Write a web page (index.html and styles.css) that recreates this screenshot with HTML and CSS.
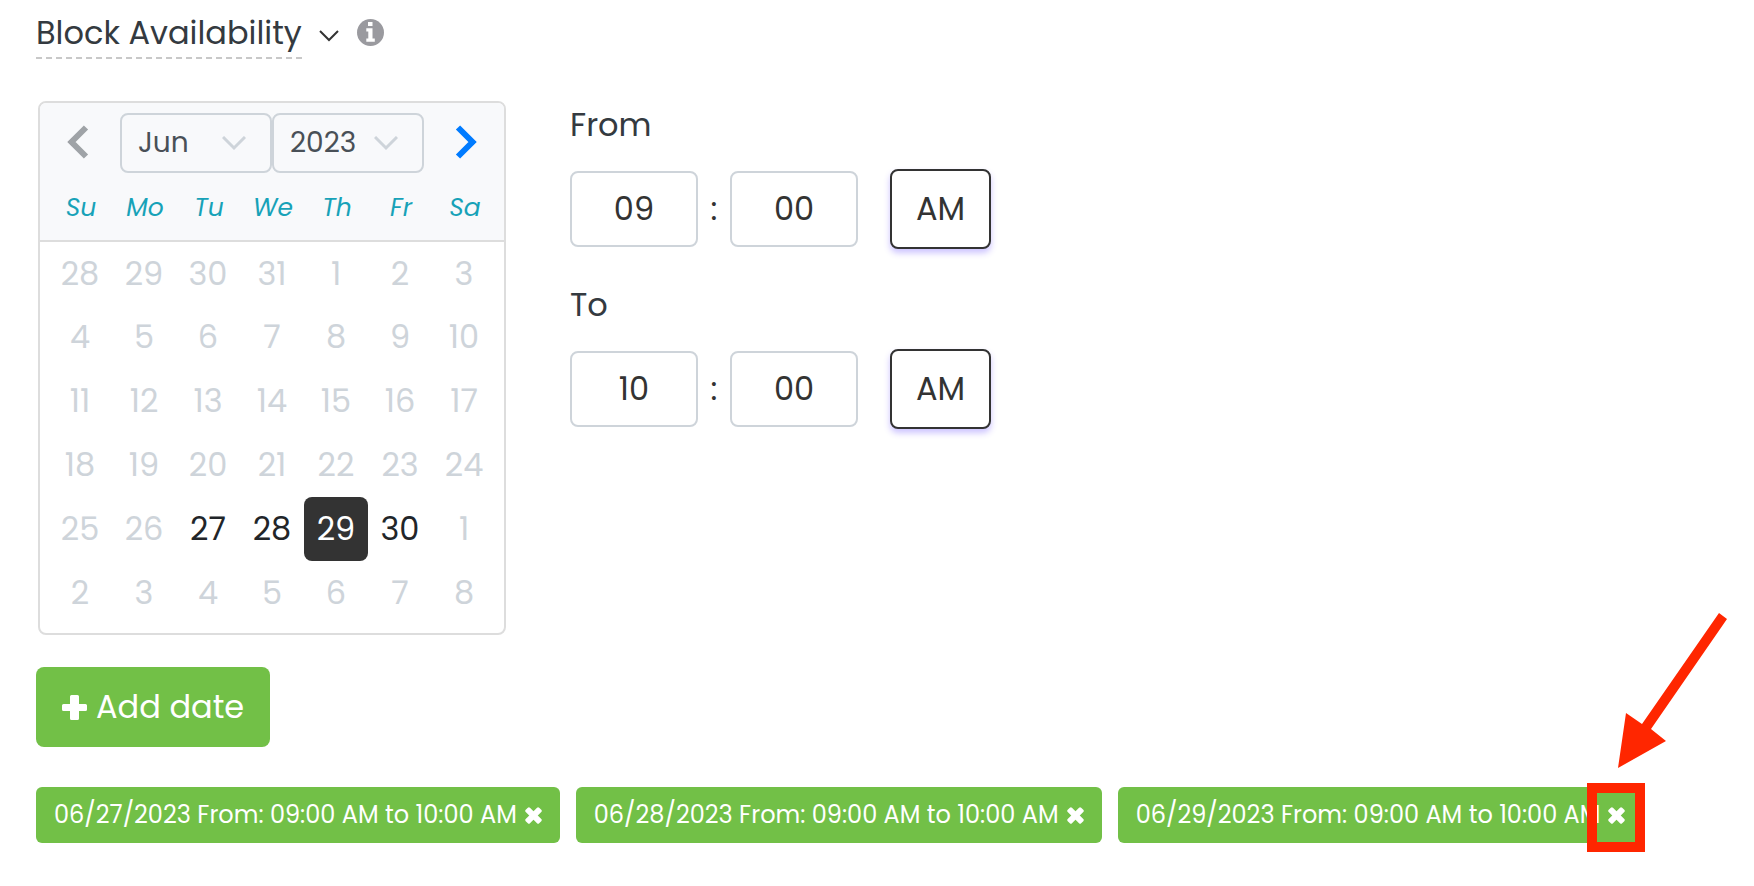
FILE: index.html
```
<!DOCTYPE html>
<html lang="en">
<head>
    <meta charset="UTF-8">
    <meta name="viewport" content="width=device-width, initial-scale=1.0">
    <title>Block Availability</title>
    <link rel="stylesheet" href="styles.css">
</head>
<body>

    <main class="container">
        <header class="heading">
            <h1>Block Availability</h1>
            <button type="button" class="icon-btn toggle" aria-label="Toggle section">
                <svg width="20" height="12" viewBox="0 0 20 12"><path d="M1 1l9 9 9-9" fill="none" stroke="#333" stroke-width="2"/></svg>
            </button>
            <button type="button" class="icon-btn info" aria-label="More information">
                <svg width="27" height="27" viewBox="0 0 27 27"><circle cx="13.500" cy="13.500" r="13.500" fill="#9a9a9f"/><path d="M11 3h4.500v4H11zM9.300 9.200h6.200v10.300h2.300v3.300H9.300v-3.300h2v-7h-2z" fill="#fff"/></svg>
            </button>
        </header>

        <div class="picker">
            <div class="calendar">
                <div class="calendar-header">
                    <button type="button" class="icon-btn prev" aria-label="Previous month">
                        <svg width="22" height="36" viewBox="0 0 22 36"><path d="M19 2.500L4.500 17 19 31.500" fill="none" stroke="#9fa3a7" stroke-width="6"/></svg>
                    </button>
                    <select class="month-select" aria-label="Month">
                        <option>May</option>
                        <option selected>Jun</option>
                        <option>Jul</option>
                    </select>
                    <select class="month-select" aria-label="Year">
                        <option selected>2023</option>
                        <option>2024</option>
                    </select>
                    <button type="button" class="icon-btn next" aria-label="Next month">
                        <svg width="22" height="36" viewBox="0 0 22 36"><path d="M3 2.500L17.500 17 3 31.500" fill="none" stroke="#007bff" stroke-width="6"/></svg>
                    </button>
                </div>
                <table class="days">
                    <thead>
                        <tr><th>Su</th><th>Mo</th><th>Tu</th><th>We</th><th>Th</th><th>Fr</th><th>Sa</th></tr>
                    </thead>
                    <tbody>
                        <tr><td>28</td><td>29</td><td>30</td><td>31</td><td>1</td><td>2</td><td>3</td></tr>
                        <tr><td>4</td><td>5</td><td>6</td><td>7</td><td>8</td><td>9</td><td>10</td></tr>
                        <tr><td>11</td><td>12</td><td>13</td><td>14</td><td>15</td><td>16</td><td>17</td></tr>
                        <tr><td>18</td><td>19</td><td>20</td><td>21</td><td>22</td><td>23</td><td>24</td></tr>
                        <tr><td>25</td><td>26</td><td><button type="button" class="day">27</button></td><td><button type="button" class="day">28</button></td><td><button type="button" class="day selected">29</button></td><td><button type="button" class="day">30</button></td><td>1</td></tr>
                        <tr><td>2</td><td>3</td><td>4</td><td>5</td><td>6</td><td>7</td><td>8</td></tr>
                    </tbody>
                </table>
            </div>

            <div class="times">
                <div class="time-group">
                    <label for="fromHour">From</label>
                    <div class="time-row">
                        <input type="text" id="fromHour" value="09">
                        <span class="colon">:</span>
                        <input type="text" id="fromMinute" value="00" aria-label="From minutes">
                        <button type="button" class="meridian">AM</button>
                    </div>
                </div>
                <div class="time-group">
                    <label for="toHour">To</label>
                    <div class="time-row">
                        <input type="text" id="toHour" value="10">
                        <span class="colon">:</span>
                        <input type="text" id="toMinute" value="00" aria-label="To minutes">
                        <button type="button" class="meridian">AM</button>
                    </div>
                </div>
            </div>
        </div>

        <button type="button" class="add-date">
            <svg width="25" height="25" viewBox="0 0 25 25"><path d="M9.500 0h6a1.500 1.500 0 0 1 1.500 1.500V9h6.500A1.500 1.500 0 0 1 25 10.500v4a1.500 1.500 0 0 1-1.500 1.500H17v7.500a1.500 1.500 0 0 1-1.500 1.500h-6A1.500 1.500 0 0 1 8 23.500V16H1.500A1.500 1.500 0 0 1 0 14.500v-4A1.500 1.500 0 0 1 1.500 9H8V1.500A1.500 1.500 0 0 1 9.500 0z" fill="#fff"/></svg>
            <span>Add date</span>
        </button>

        <div class="tags">
            <div class="tag">
                <span>06/27/2023 From: 09:00 AM to 10:00 AM</span>
                <button type="button" class="icon-btn remove" aria-label="Remove 06/27/2023">
                    <svg width="17" height="17" viewBox="0 0 17 17" fill="#fff"><g transform="rotate(45 8.500 8.500)"><rect x="-1" y="5.500" width="19" height="6" rx="1.500"/><rect x="5.500" y="-1" width="6" height="19" rx="1.500"/></g></svg>
                </button>
            </div>
            <div class="tag">
                <span>06/28/2023 From: 09:00 AM to 10:00 AM</span>
                <button type="button" class="icon-btn remove" aria-label="Remove 06/28/2023">
                    <svg width="17" height="17" viewBox="0 0 17 17" fill="#fff"><g transform="rotate(45 8.500 8.500)"><rect x="-1" y="5.500" width="19" height="6" rx="1.500"/><rect x="5.500" y="-1" width="6" height="19" rx="1.500"/></g></svg>
                </button>
            </div>
            <div class="tag">
                <span>06/29/2023 From: 09:00 AM to 10:00 AM</span>
                <button type="button" class="icon-btn remove" aria-label="Remove 06/29/2023">
                    <svg width="17" height="17" viewBox="0 0 17 17" fill="#fff"><g transform="rotate(45 8.500 8.500)"><rect x="-1" y="5.500" width="19" height="6" rx="1.500"/><rect x="5.500" y="-1" width="6" height="19" rx="1.500"/></g></svg>
                </button>
                <div class="marker"></div>
                <svg class="arrow" width="110" height="156" viewBox="0 0 110 156"><path d="M101 0l8 6-76 110 15 12L0 155l8-55 16 11z" fill="#ff2600"/></svg>
            </div>
        </div>
    </main>

</body>
</html>
```
FILE: styles.css
```
* {
    box-sizing: border-box;
}
body {
    margin: 0;
    background-color: #fff;
    color: #343a40;
    font-family: Poppins, Inter, "Liberation Sans", sans-serif;
    font-size: 32px;
    line-height: 48px;
}
button,
input,
select {
    font: inherit;
    color: inherit;
}
button {
    cursor: pointer;
}
svg {
    display: block;
}
.container {
    padding: 9px 36px 36px;
}
.heading {
    display: flex;
    align-items: flex-start;
}
.heading h1 {
    margin: 0;
    font-size: 32px;
    font-weight: 400;
    border-bottom: 2px dashed #c8c8c8;
}
.icon-btn {
    display: flex;
    padding: 0;
    border: 0;
    background: none;
}
.toggle {
    margin: 21px 0 0 17px;
}
.info {
    margin: 10px 0 0 18px;
}
.picker {
    display: flex;
    gap: 64px;
    margin-top: 42px;
}
.calendar {
    width: 468px;
    margin-left: 2px;
    padding-bottom: 8px;
    border: 2px solid #ddd;
    border-radius: 8px;
    overflow: hidden;
}
.calendar-header {
    display: flex;
    align-items: center;
    padding: 10px 27px 0;
    background-color: #f8f9fb;
}
.calendar-header .prev {
    margin-right: auto;
}
.calendar-header .next {
    margin-left: auto;
}
.month-select {
    width: 152px;
    height: 60px;
    padding: 0 16px;
    border: 2px solid #ced4da;
    border-radius: 8px;
    color: #495057;
    font-size: 28px;
    appearance: none;
    background: url("data:image/svg+xml,%3Csvg xmlns='http://www.w3.org/2000/svg' width='24' height='15'%3E%3Cpath d='M1 1l11 11L23 1' fill='none' stroke='%23ced4da' stroke-width='3'/%3E%3C/svg%3E") no-repeat right 24px center;
}
.days {
    width: 100%;
    border-collapse: collapse;
    table-layout: fixed;
}
.days thead {
    background-color: #f8f9fb;
    border-bottom: 2px solid #ddd;
}
.days th {
    height: 68px;
    padding: 2px 0 0 2px;
    color: #17a2b8;
    font-size: 25px;
    font-style: italic;
    font-weight: 400;
}
.days th:first-child {
    width: 72px;
    padding-left: 10px;
}
.days th:last-child {
    width: 72px;
    padding-right: 8px;
}
.days td {
    height: 64px;
    padding: 0;
    color: #ced4da;
    text-align: center;
}
.days td:first-child {
    padding-left: 8px;
}
.days td:last-child {
    padding-right: 8px;
}
.day {
    display: block;
    width: 64px;
    height: 64px;
    margin: 0 auto;
    padding: 0;
    border: 0;
    border-radius: 8px;
    background: none;
    color: #212529;
}
.day.selected {
    background-color: #333;
    color: #fff;
}
.time-group {
    margin-bottom: 32px;
}
.time-group label {
    display: block;
    margin-bottom: 20px;
}
.time-row {
    display: flex;
    align-items: center;
    color: #333;
}
.time-row input {
    width: 128px;
    height: 76px;
    padding: 0;
    border: 2px solid #ced4da;
    border-radius: 8px;
    text-align: center;
}
.colon {
    width: 32px;
    text-align: center;
}
.meridian {
    width: 101px;
    height: 80px;
    margin-left: 32px;
    padding: 0;
    border: 2px solid #333;
    border-radius: 8px;
    background-color: #fff;
    box-shadow: 0 4px 6px rgba(90, 60, 255, 0.3);
}
.add-date {
    display: flex;
    align-items: center;
    gap: 9px;
    margin-top: 32px;
    height: 80px;
    padding: 0 26px;
    border: 0;
    border-radius: 8px;
    background-color: #72c047;
    color: #fff;
}
.tags {
    display: flex;
    flex-wrap: wrap;
    gap: 16px;
    margin-top: 40px;
}
.tag {
    position: relative;
    display: flex;
    align-items: center;
    gap: 8px;
    height: 56px;
    padding: 0 18px;
    border-radius: 6px;
    background-color: #72c047;
    color: #fff;
    font-size: 24px;
}
/* red frame and arrow over the remove button */
.marker {
    position: absolute;
    top: -4px;
    right: -2px;
    width: 58px;
    height: 69px;
    border: 10px solid #ff2600;
}
.arrow {
    position: absolute;
    right: -85px;
    bottom: 74px;
}
```
